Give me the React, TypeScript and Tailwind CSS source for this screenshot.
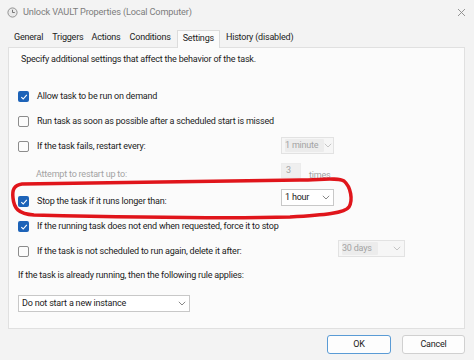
import React from 'react';

const font = { fontFamily: 'Roboto, "Noto Sans", sans-serif' };

function Check({ checked }: { checked?: boolean }) {
    if (checked) {
        return (
            <span className="flex h-[11px] w-[11px] shrink-0 items-center justify-center rounded-[2px] bg-[#1d63b8]">
                <svg width="8" height="8" viewBox="0 0 8 8">
                    <path d="M1.3 4.2 L3.2 6 L6.8 1.8" fill="none" stroke="#fff" strokeWidth="1.1" />
                </svg>
            </span>
        );
    }
    return <span className="h-[11px] w-[11px] shrink-0 rounded-[2px] border border-[#8c8c8c] bg-[#fcfcfc]" />;
}

function Chevron({ color = '#7a7a7a' }: { color?: string }) {
    return (
        <svg width="8" height="5" viewBox="0 0 8 5" className="shrink-0">
            <path d="M0.8 0.8 L4 4 L7.2 0.8" fill="none" stroke={color} strokeWidth="0.9" />
        </svg>
    );
}

function Select({ label, width, disabled }: { label: string; width: string; disabled?: boolean }) {
    return (
        <div
            className={`flex h-[17px] shrink-0 items-center justify-between whitespace-nowrap border px-[3px] ${width} ${
                disabled ? 'border-[#e2e2e2] bg-[#f6f6f6] text-[#a3a3a3]' : 'border-[#c8c8c8] bg-white text-[#1b1b1b]'
            }`}
        >
            <span className={disabled ? 'rounded-[1px] bg-[#ececec] pr-[6px]' : ''}>{label}</span>
            <Chevron color={disabled ? '#c0c0c0' : '#7a7a7a'} />
        </div>
    );
}

function Row({ checked, label, children, labelWidth = 'w-[244px]' }: { checked?: boolean; label: string; children?: React.ReactNode; labelWidth?: string }) {
    return (
        <div className="flex h-[25px] items-center">
            <Check checked={checked} />
            <span className={`ml-[8px] ${labelWidth} shrink-0 whitespace-nowrap`}>{label}</span>
            {children}
        </div>
    );
}

export default function App() {
    return (
        <div className="relative h-[360px] w-[474px] overflow-hidden bg-[#f3f3f3] text-[9px] tracking-[-0.2px] text-[#1b1b1b]" style={font}>
            {/* title bar */}
            <div className="flex h-[24px] items-center pl-[7px] pr-[8px] text-[#7d7d7d]">
                <svg width="11" height="11" viewBox="0 0 12 12" className="shrink-0">
                    <circle cx="6" cy="6" r="5" fill="#e9e9e9" stroke="#8a8a8a" strokeWidth="1" />
                    <path d="M6 3 V6 H8.5" fill="none" stroke="#6a6a6a" strokeWidth="1" />
                </svg>
                <span className="ml-[5px] text-[9.2px] tracking-[-0.15px]">Unlock VAULT Properties (Local Computer)</span>
                <svg width="9" height="9" viewBox="0 0 9 9" className="ml-auto">
                    <path d="M1 1 L8 8 M8 1 L1 8" stroke="#8a8a8a" strokeWidth="0.9" />
                </svg>
            </div>

            {/* tabs */}
            <div className="flex h-[23px] items-end pl-[9px] text-[#1b1b1b]">
                <span className="px-[5px] pb-[3px]">General</span>
                <span className="px-[4px] pb-[3px]">Triggers</span>
                <span className="px-[4px] pb-[3px]">Actions</span>
                <span className="px-[5px] pb-[3px]">Conditions</span>
                <span className="relative z-10 mb-[-1px] ml-[1px] h-[18px] border border-b-0 border-[#dcdcdc] bg-[#fbfbfb] px-[5px] pt-[1px]">Settings</span>
                <span className="px-[6px] pb-[3px]">History (disabled)</span>
            </div>

            {/* panel */}
            <div className="mx-[8px] h-[282px] w-[457px] border border-[#e0e0e0] bg-[#fbfbfb] pl-[9px]">
                <div className="flex h-[18px] items-end pl-[3px]">
                    Specify additional settings that affect the behavior of the task.
                </div>
                <div className="h-[18px]" />
                <Row checked label="Allow task to be run on demand" />
                <Row label="Run task as soon as possible after a scheduled start is missed" />
                <Row label="If the task fails, restart every:">
                    <div className="mt-[-2px]">
                        <Select label="1 minute" width="w-[53px]" disabled />
                    </div>
                </Row>
                <div className="flex h-[30px] items-start text-[#a3a3a3]">
                    <span className="ml-[18px] mt-[9px] w-[245px]">Attempt to restart up to:</span>
                    <div className="mt-[4px] flex h-[15px] w-[20px] items-center border border-[#ececec] bg-[#efefef] pl-[4px]">3</div>
                    <span className="ml-[8px] mt-[10px]">times</span>
                </div>
                <Row checked label="Stop the task if it runs longer than:">
                    <div className="mt-[-8px]">
                        <Select label="1 hour" width="w-[53px]" />
                    </div>
                </Row>
                <Row checked label="If the running task does not end when requested, force it to stop" />
                <Row label="If the task is not scheduled to run again, delete it after:" labelWidth="w-[301px]">
                    <div className="mt-[-6px]">
                        <Select label="30 days" width="w-[67px]" disabled />
                    </div>
                </Row>
                <div className="flex h-[23px] items-center">If the task is already running, then the following rule applies:</div>
                <div className="h-[8px]" />
                <Select label="Do not start a new instance" width="w-[172px]" />
            </div>

            {/* buttons */}
            <div className="flex justify-end gap-[11px] pr-[9px] pt-[6px]">
                <button className="h-[19px] w-[64px] rounded-[3px] border border-[#5a9bd5] bg-[#fdfdfd] text-[9px]">OK</button>
                <button className="h-[19px] w-[63px] rounded-[3px] border border-[#d0d0d0] bg-[#fdfdfd] text-[9px]">Cancel</button>
            </div>

            {/* red annotation */}
            <svg className="pointer-events-none absolute left-0 top-0" width="474" height="360" viewBox="0 0 474 360">
                <path
                    d="M22 184 C14 185 12 190 13 198 C14 208 18 214 34 215 C120 217 220 219 290 217 C325 215 345 213 349 207 C353 200 351 187 344 181 C338 177 320 180 300 180 C200 181 100 183 22 184 Z"
                    fill="none"
                    stroke="#e0151b"
                    strokeWidth="3.5"
                    strokeLinejoin="round"
                />
            </svg>
        </div>
    );
}
